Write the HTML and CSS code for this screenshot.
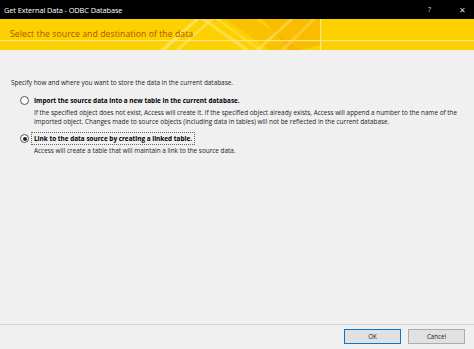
FILE: index.html
```html
<!DOCTYPE html>
<html>
<head>
<meta charset="utf-8">
<link rel="stylesheet" href="styles.css">
</head>
<body>
<div class="window">
  <div class="titlebar">
    <span class="title">Get External Data - ODBC Database</span>
    <span class="tb-btns"><span class="help">?</span><span class="close">✕</span></span>
  </div>
  <div class="banner">
    <svg class="deco" width="474" height="31" viewBox="0 0 474 31">
      <polygon points="225,0 255,0 300,31 270,31" fill="#f7b500" opacity="0.55"/>
      <polygon points="262,0 320,0 320,26 300,31 290,31" fill="#f5a800" opacity="0.5"/>
      <polygon points="160,31 195,0 200,0 166,31" fill="#ffe66a" opacity="0.7"/>
      <polygon points="175,31 210,0 214,0 180,31" fill="#ffe66a" opacity="0.6"/>
      <polygon points="200,0 206,0 250,31 244,31" fill="#ffe66a" opacity="0.6"/>
      <polygon points="215,0 219,0 262,31 258,31" fill="#ffe66a" opacity="0.5"/>
      <polygon points="255,31 290,0 294,0 260,31" fill="#ffe66a" opacity="0.5"/>
      <polygon points="280,31 312,0 316,0 285,31" fill="#ffe66a" opacity="0.4"/>
      <rect x="320" y="0" width="1.2" height="31" fill="#ffe680"/>
      <rect x="0" y="21" width="474" height="1.2" fill="#ffe680"/>
    </svg>
    <span class="banner-text">Select the source and destination of the data</span>
  </div>
  <div class="content">
    <p class="intro">Specify how and where you want to store the data in the current database.</p>
    <div class="option">
      <div class="opt-row"><span class="radio"></span><span class="label">Import the source data into a new table in the current database.</span></div>
      <p class="desc">If the specified object does not exist, Access will create it. If the specified object already exists, Access will append a number to the name of the imported object. Changes made to source objects (including data in tables) will not be reflected in the current database.</p>
    </div>
    <div class="option second">
      <div class="opt-row"><span class="radio checked"></span><span class="label focus">Link to the data source by creating a linked table.</span></div>
      <p class="desc">Access will create a table that will maintain a link to the source data.</p>
    </div>
  </div>
  <div class="footer">
    <button class="btn default">OK</button>
    <button class="btn">Cancel</button>
  </div>
</div>
</body>
</html>
```

FILE: styles.css
```css
* { box-sizing: border-box; }
html, body { margin: 0; padding: 0; }
body { width: 474px; height: 349px; overflow: hidden; background: #f0f0f0; font-family: "Open Sans", "Noto Sans", sans-serif; }
.window { display: flex; flex-direction: column; height: 349px; }
.titlebar { height: 19px; background: #000; color: #fff; display: flex; align-items: center; justify-content: space-between; padding: 0 0 0 4px; }
.title { font-size: 7.4px; letter-spacing: -0.1px; }
.tb-btns { display: flex; align-items: center; }
.help { font-size: 7px; color: #ddd; margin-right: 28px; }
.close { font-size: 8px; color: #ddd; margin-right: 8px; }
.banner { height: 31px; background: #fdd000; position: relative; display: flex; align-items: center; padding-left: 10px; padding-bottom: 1px; }
.deco { position: absolute; left: 0; top: 0; }
.banner-text { position: relative; font-size: 8.7px; color: #a85600; letter-spacing: 0.05px; }
.content { flex: 1; padding: 28px 0 0 11px; color: #1a1a1a; font-size: 6.4px; line-height: 9px; }
.intro { margin: 0 0 9px 0; }
.option { margin: 0; }
.second { margin-top: 8px; }
.opt-row { display: flex; align-items: center; margin-left: 9px; height: 9px; }
.radio { width: 9px; height: 9px; border-radius: 50%; border: 1px solid #555; background: #fff; margin-right: 4px; display: flex; align-items: center; justify-content: center; flex: none; }
.radio.checked::after { content: ""; width: 4px; height: 4px; border-radius: 50%; background: #222; }
.label { font-weight: 700; font-size: 6.4px; color: #000; padding: 0 1px; }
.label.focus { outline: 1px dotted #666; outline-offset: 1px; }
.desc { margin: 3px 0 0 23px; padding-right: 14px; color: #222; }
.footer { height: 25px; border-top: 1px solid #d6d6d6; display: flex; justify-content: flex-end; align-items: flex-start; padding: 4px 9px 0 0; gap: 7px; }
.btn { width: 57px; height: 15px; background: #e1e1e1; border: 1px solid #adadad; font-family: "Open Sans", sans-serif; font-size: 6.2px; color: #222; padding: 0; }
.btn.default { border-color: #0078d7; }
```
